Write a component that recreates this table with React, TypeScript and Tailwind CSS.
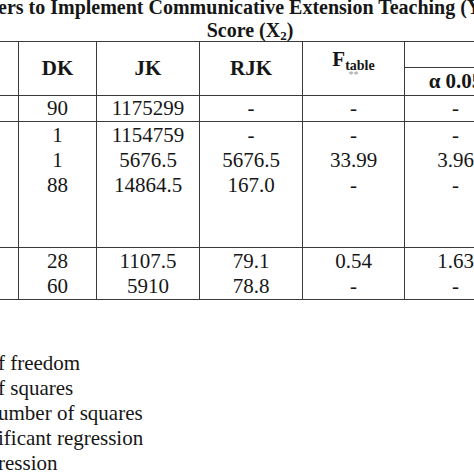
export default function App() {
  const line = "border border-[#3a3a3a]"
  const cell = "border border-[#3a3a3a] align-top pt-[1px]"

  return (
    <div className="w-[474px] h-[474px] overflow-hidden bg-white text-[#161616] font-[Liberation_Serif,Times_New_Roman,serif]">

      {/* title, cut at both sides */}
      <div className="whitespace-nowrap font-bold text-[20px] leading-[23px] -ml-[2px] -mt-[4px]">
        ers to Implement Communicative Extension Teaching (Y) and Farmers
      </div>
      <div className="w-[500px] text-center font-bold text-[20px] leading-[23px]">
        Score (X<sub className="text-[13px]">2</sub>)
      </div>

      <table className="table-fixed w-[732px] border-collapse -ml-[122px] mt-[-1px] text-[21px] leading-[25px] text-center">
        <colgroup>
          <col className="w-[140px]" />
          <col className="w-[78px]" />
          <col className="w-[103px]" />
          <col className="w-[103px]" />
          <col className="w-[102px]" />
          <col className="w-[102px]" />
          <col className="w-[104px]" />
        </colgroup>
        <thead>
          <tr className="h-[26px]">
            <th rowSpan={2} className={line}>Source</th>
            <th rowSpan={2} className={`${line} font-bold`}>DK</th>
            <th rowSpan={2} className={`${line} font-bold`}>JK</th>
            <th rowSpan={2} className={`${line} font-bold`}>RJK</th>
            <th rowSpan={2} className={`${line} font-bold align-top pt-[6px]`}>
              <div className="leading-[22px]">
                F<sub className="text-[14px]">table</sub>
              </div>
              <div className="text-[10px] leading-[10px] text-[#9a9a9a] font-normal">**</div>
            </th>
            <th colSpan={2} className={`${line} font-bold`}>F<sub className="text-[14px]">count</sub></th>
          </tr>
          <tr className="h-[28px]">
            <th className={`${line} font-bold`}>α 0.05</th>
            <th className={`${line} font-bold`}>α 0.01</th>
          </tr>
        </thead>
        <tbody>
          <tr className="h-[26px]">
            <td className={line}>Total</td>
            <td className={line}>90</td>
            <td className={line}>1175299</td>
            <td className={line}>-</td>
            <td className={line}>-</td>
            <td className={line}>-</td>
            <td className={line}>-</td>
          </tr>
          <tr className="h-[126px]">
            <td className={cell}>Mean<br />Reg<br />Error</td>
            <td className={cell}>1<br />1<br />88</td>
            <td className={cell}>1154759<br />5676.5<br />14864.5</td>
            <td className={cell}>-<br />5676.5<br />167.0</td>
            <td className={cell}>-<br />33.99<br />-</td>
            <td className={cell}>-<br />3.96<br />-</td>
            <td className={cell}>-<br />6.93<br />-</td>
          </tr>
          <tr className="h-[51px]">
            <td className={cell}>Fit<br />Pure</td>
            <td className={cell}>28<br />60</td>
            <td className={cell}>1107.5<br />5910</td>
            <td className={cell}>79.1<br />78.8</td>
            <td className={cell}>0.54<br />-</td>
            <td className={cell}>1.63<br />-</td>
            <td className={cell}>2.00<br />-</td>
          </tr>
        </tbody>
      </table>

      {/* notes, cut at the left */}
      <div className="mt-[51px] -ml-[2px] text-[21px] leading-[25px] whitespace-nowrap">
        <div>f freedom</div>
        <div>f squares</div>
        <div>umber of squares</div>
        <div>ificant regression</div>
        <div>ression</div>
      </div>
    </div>
  )
}
